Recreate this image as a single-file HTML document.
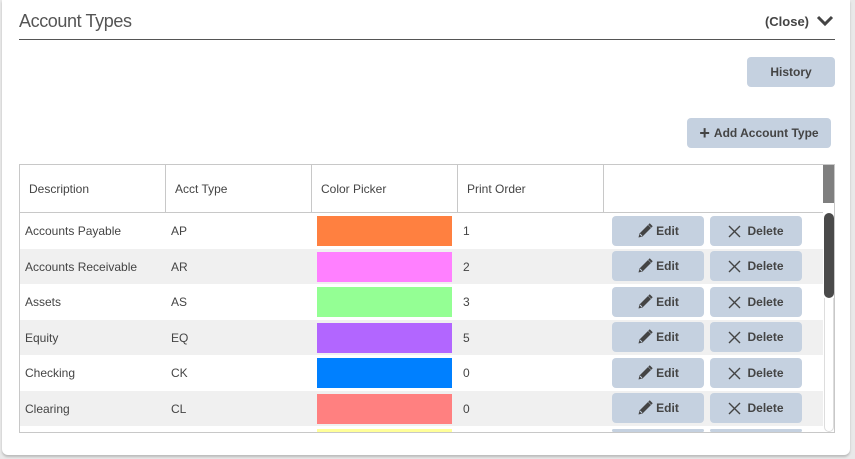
<!DOCTYPE html>
<html><head><style>
*{box-sizing:border-box;margin:0;padding:0}
body{width:855px;height:459px;background:#e9e9e9;font-family:"Liberation Sans",sans-serif;position:relative;overflow:hidden}
.card{position:absolute;left:2px;top:0;width:848px;height:455px;background:#fff;border-radius:0 0 6px 6px;box-shadow:0 2px 2px #bbb}
.title{position:absolute;left:19px;top:11px;font-size:18px;color:#555;letter-spacing:-0.4px}
.close{position:absolute;right:46px;top:14px;font-size:13px;font-weight:bold;color:#444}
.chev{position:absolute;left:816px;top:15px}
.hr{position:absolute;left:19px;top:39px;width:816px;height:1px;background:#555}
.btn{position:absolute;background:#c5d1e0;border-radius:4px;color:#444;font-weight:bold;font-size:12px;display:flex;align-items:center;justify-content:center}
.tbl{position:absolute;left:19px;top:164px;width:816px;height:269px;border:1px solid #c8c8c8;overflow:hidden}
.hdr{position:absolute;left:0;top:0;width:803px;height:48px;border-bottom:1px solid #c8c8c8}
.hdr div{position:absolute;top:0;height:48px;border-right:1px solid #c8c8c8;padding:17px 0 0 9px;font-size:12px;color:#444}
.row{position:absolute;left:0;width:803px;height:35.5px;font-size:12px;color:#444}
.row span{position:absolute;top:11px}
.sw{position:absolute;left:297px;top:3px;width:135px;height:30px}
.sb{position:absolute;left:803px;top:0;width:12px;height:268px;background:#fff}
</style></head><body>
<div class="card">
</div>
<div class="title">Account Types</div>
<div class="close">(Close)</div>
<svg class="chev" width="18" height="12" viewBox="0 0 18 12"><path d="M2 2 L9 9 L16 2" stroke="#444" stroke-width="3" fill="none"/></svg>
<div class="hr"></div>
<div class="btn" style="left:747px;top:57px;width:88px;height:30px">History</div>
<div class="btn" style="left:687px;top:118px;width:144px;height:30px"><span style="font-size:18px;margin-right:4px">+</span>Add Account Type</div>
<div class="tbl">
<div class="hdr">
<div style="left:0;width:146px">Description</div>
<div style="left:146px;width:146px">Acct Type</div>
<div style="left:292px;width:146px">Color Picker</div>
<div style="left:438px;width:146px">Print Order</div>
</div>
<div class="row" style="top:48px;background:#fff"><span style="left:5px">Accounts Payable</span><span style="left:151px">AP</span><div class="sw" style="background:#ff8040"></div><span style="left:443px">1</span></div>
<div class="row" style="top:84px;background:#f0f0f0"><span style="left:5px">Accounts Receivable</span><span style="left:151px">AR</span><div class="sw" style="background:#ff80ff"></div><span style="left:443px">2</span></div>
<div class="row" style="top:119px;background:#fff"><span style="left:5px">Assets</span><span style="left:151px">AS</span><div class="sw" style="background:#94ff94"></div><span style="left:443px">3</span></div>
<div class="row" style="top:155px;background:#f0f0f0"><span style="left:5px">Equity</span><span style="left:151px">EQ</span><div class="sw" style="background:#b266ff"></div><span style="left:443px">5</span></div>
<div class="row" style="top:190px;background:#fff"><span style="left:5px">Checking</span><span style="left:151px">CK</span><div class="sw" style="background:#0080ff"></div><span style="left:443px">0</span></div>
<div class="row" style="top:226px;background:#f0f0f0"><span style="left:5px">Clearing</span><span style="left:151px">CL</span><div class="sw" style="background:#ff8080"></div><span style="left:443px">0</span></div>
<div class="row" style="top:261px;background:#fff"><div class="sw" style="background:#ffff99"></div></div>
<div class="sb"><div style="position:absolute;left:0;top:0;width:12px;height:38px;background:#7f7f7f"></div><div style="position:absolute;left:1px;top:48px;width:10px;height:85px;background:#4a4a4a;border-radius:5px"></div><div style="position:absolute;left:1px;top:133px;width:10px;height:134px;border:1px solid #ddd;border-top:none;border-radius:0 0 5px 5px"></div></div>
</div>
<div id="btns"></div>
<script>
var tops=[216,251,287,322,358,393,429];
var h='';
tops.forEach(function(t,i){
var hh=i==6?3:30;
h+='<div class="btn" style="left:612px;top:'+t+'px;width:92px;height:'+hh+'px">'+(i<6?'<svg width="16" height="16" viewBox="0 0 16 16" style="margin-right:3px"><path d="M1.5 14.5 L2.5 10.5 L11 2 L14 5 L5.5 13.5 Z" fill="#444"/><path d="M12 1 L15 4" stroke="#444" stroke-width="2"/><path d="M3 11 L5 13" stroke="#c5d1e0" stroke-width="1"/></svg>Edit':'')+'</div>';
h+='<div class="btn" style="left:710px;top:'+t+'px;width:92px;height:'+hh+'px">'+(i<6?'<svg width="13" height="13" viewBox="0 0 13 13" style="margin-right:6px"><path d="M1 1 L12 12 M12 1 L1 12" stroke="#444" stroke-width="1.4"/></svg>Delete':'')+'</div>';
});
document.getElementById('btns').innerHTML=h;
</script>
</body></html>
